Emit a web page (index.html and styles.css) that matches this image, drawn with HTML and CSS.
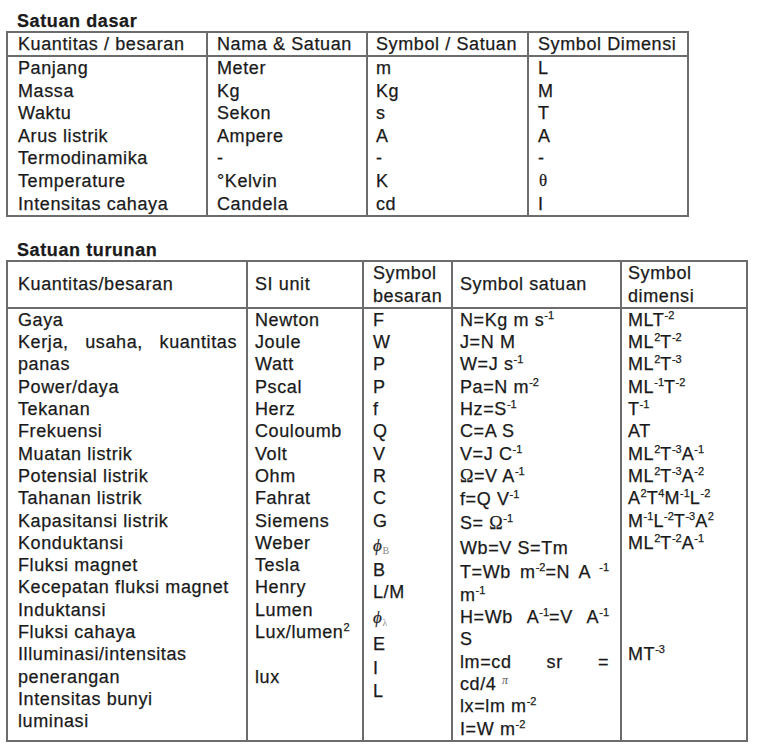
FILE: index.html
```html
<!DOCTYPE html>
<html lang="id">
<head>
<meta charset="utf-8">
<title>Satuan dasar dan turunan</title>
<link rel="stylesheet" href="styles.css">
</head>
<body>
<div class="page">
  <h2 class="title">Satuan dasar</h2>
  <table class="t1">
    <colgroup>
      <col class="c200"><col class="c160"><col class="c161"><col class="c160">
    </colgroup>
    <thead>
      <tr><th class="p1">Kuantitas / besaran</th><th>Nama &amp; Satuan</th><th class="p3">Symbol / Satuan</th><th>Symbol Dimensi</th></tr>
    </thead>
    <tbody>
      <tr><td class="p1">Panjang</td><td>Meter</td><td class="p3">m</td><td>L</td></tr>
      <tr><td class="p1">Massa</td><td>Kg</td><td class="p3">Kg</td><td>M</td></tr>
      <tr><td class="p1">Waktu</td><td>Sekon</td><td class="p3">s</td><td>T</td></tr>
      <tr><td class="p1">Arus listrik</td><td>Ampere</td><td class="p3">A</td><td>A</td></tr>
      <tr><td class="p1">Termodinamika</td><td>-</td><td class="p3">-</td><td>-</td></tr>
      <tr><td class="p1">Temperature</td><td>°Kelvin</td><td class="p3">K</td><td><span class="theta">θ</span></td></tr>
      <tr><td class="p1">Intensitas cahaya</td><td>Candela</td><td class="p3">cd</td><td>I</td></tr>
    </tbody>
  </table>

  <h2 class="title title-2">Satuan turunan</h2>
  <table class="t2">
    <colgroup>
      <col class="w240"><col class="w116"><col class="w89"><col class="w169"><col class="w126">
    </colgroup>
    <thead>
      <tr>
        <th class="q1">Kuantitas/besaran</th>
        <th class="q2">SI unit</th>
        <th class="q3">Symbol<br>besaran</th>
        <th class="q4">Symbol satuan</th>
        <th class="q5 top">Symbol<br>dimensi</th>
      </tr>
    </thead>
    <tbody>
      <tr>
        <td class="q1">
          <div class="ln">Gaya</div>
          <div class="ln just">Kerja, usaha, kuantitas</div>
          <div class="ln">panas</div>
          <div class="ln">Power/daya</div>
          <div class="ln">Tekanan</div>
          <div class="ln">Frekuensi</div>
          <div class="ln">Muatan listrik</div>
          <div class="ln">Potensial listrik</div>
          <div class="ln">Tahanan listrik</div>
          <div class="ln">Kapasitansi listrik</div>
          <div class="ln">Konduktansi</div>
          <div class="ln">Fluksi magnet</div>
          <div class="ln">Kecepatan fluksi magnet</div>
          <div class="ln">Induktansi</div>
          <div class="ln">Fluksi cahaya</div>
          <div class="ln">Illuminasi/intensitas</div>
          <div class="ln">penerangan</div>
          <div class="ln">Intensitas bunyi</div>
          <div class="ln">luminasi</div>
        </td>
        <td class="q2">
          <div class="ln">Newton</div>
          <div class="ln">Joule</div>
          <div class="ln">Watt</div>
          <div class="ln">Pscal</div>
          <div class="ln">Herz</div>
          <div class="ln">Couloumb</div>
          <div class="ln">Volt</div>
          <div class="ln">Ohm</div>
          <div class="ln">Fahrat</div>
          <div class="ln">Siemens</div>
          <div class="ln">Weber</div>
          <div class="ln">Tesla</div>
          <div class="ln">Henry</div>
          <div class="ln">Lumen</div>
          <div class="ln">Lux/lumen<sup>2</sup></div>
          <div class="ln">&nbsp;</div>
          <div class="ln">lux</div>
        </td>
        <td class="q3">
          <div class="ln">F</div>
          <div class="ln">W</div>
          <div class="ln">P</div>
          <div class="ln">P</div>
          <div class="ln">f</div>
          <div class="ln">Q</div>
          <div class="ln">V</div>
          <div class="ln">R</div>
          <div class="ln">C</div>
          <div class="ln">G</div>
          <div class="ln h27"><span class="phi">ϕ</span><sub class="psub">B</sub></div>
          <div class="ln">B</div>
          <div class="ln">L/M</div>
          <div class="ln h28"><span class="phi">ϕ</span><sub class="psub">λ</sub></div>
          <div class="ln h26">E</div>
          <div class="ln">I</div>
          <div class="ln">L</div>
        </td>
        <td class="q4">
          <div class="ln">N=Kg m s<sup>-1</sup></div>
          <div class="ln">J=N M</div>
          <div class="ln">W=J s<sup>-1</sup></div>
          <div class="ln">Pa=N m<sup>-2</sup></div>
          <div class="ln">Hz=S<sup>-1</sup></div>
          <div class="ln">C=A S</div>
          <div class="ln">V=J C<sup>-1</sup></div>
          <div class="ln h235"><span class="om">Ω</span>=V A<sup>-1</sup></div>
          <div class="ln h23">f=Q V<sup>-1</sup></div>
          <div class="ln h24">S= <span class="om">Ω</span><sup>-1</sup></div>
          <div class="ln h26">Wb=V S=Tm</div>
          <div class="ln just">T=Wb m<sup>-2</sup>=N A <sup>-1</sup></div>
          <div class="ln">m<sup>-1</sup></div>
          <div class="ln just">H=Wb A<sup>-1</sup>=V A<sup>-1</sup></div>
          <div class="ln">S</div>
          <div class="ln just">lm=cd sr =</div>
          <div class="ln">cd/4 <span class="pi">π</span></div>
          <div class="ln">lx=lm m<sup>-2</sup></div>
          <div class="ln">I=W m<sup>-2</sup></div>
        </td>
        <td class="q5">
          <div class="ln">MLT<sup>-2</sup></div>
          <div class="ln">ML<sup>2</sup>T<sup>-2</sup></div>
          <div class="ln">ML<sup>2</sup>T<sup>-3</sup></div>
          <div class="ln">ML<sup>-1</sup>T<sup>-2</sup></div>
          <div class="ln">T<sup>-1</sup></div>
          <div class="ln">AT</div>
          <div class="ln">ML<sup>2</sup>T<sup>-3</sup>A<sup>-1</sup></div>
          <div class="ln">ML<sup>2</sup>T<sup>-3</sup>A<sup>-2</sup></div>
          <div class="ln">A<sup>2</sup>T<sup>4</sup>M<sup>-1</sup>L<sup>-2</sup></div>
          <div class="ln">M<sup>-1</sup>L<sup>-2</sup>T<sup>-3</sup>A<sup>2</sup></div>
          <div class="ln">ML<sup>2</sup>T<sup>-2</sup>A<sup>-1</sup></div>
          <div class="ln">&nbsp;</div>
          <div class="ln">&nbsp;</div>
          <div class="ln">&nbsp;</div>
          <div class="ln">&nbsp;</div>
          <div class="ln">MT<sup>-3</sup></div>
        </td>
      </tr>
    </tbody>
  </table>
</div>
</body>
</html>
```

FILE: styles.css
```css
* { box-sizing: border-box; }

html, body {
  margin: 0;
  background: #ffffff;
}

body {
  color: #1a1a1a;
  font-family: "Liberation Sans", Arial, sans-serif;
  font-size: 18px;
  letter-spacing: 0.6px;
  -webkit-text-stroke: 0.25px #1a1a1a;
}

.page {
  padding: 11px 0 0 6px;
}

.title {
  margin: 0;
  padding-left: 11px;
  font-size: 18px;
  font-weight: bold;
  line-height: 20px;
}

.title-2 {
  margin-top: 23px;
}

table {
  border-collapse: collapse;
  table-layout: fixed;
  border: 2px solid #6c6c6c;
}

th, td {
  padding: 0 0 0 9px;
  font-weight: normal;
  text-align: left;
  white-space: nowrap;
  border-left: 2px solid #6c6c6c;
}

th {
  border-bottom: 2px solid #6c6c6c;
}

/* table 1 */
.t1 { width: 683px; }
.t1 th, .t1 td { line-height: 22.4px; }
.c200 { width: 200px; }
.c160 { width: 160px; }
.c161 { width: 161px; }
.t1 .p1 { padding-left: 10px; }
.t1 .p3 { padding-left: 8px; }

.theta {
  font-family: "Liberation Serif", "DejaVu Serif", serif;
  font-size: 17px;
  margin-left: 1px;
}

/* table 2 */
.t2 { width: 742px; }
.t2 th { line-height: 22.3px; vertical-align: middle; }
.t2 th.top { vertical-align: top; }
.t2 td { vertical-align: top; }

.w240 { width: 240px; }
.w116 { width: 116px; }
.w89 { width: 89px; }
.w169 { width: 169px; }
.w126 { width: 126px; }

.q1 { padding-left: 10px !important; padding-right: 9px !important; }
.q2 { padding-left: 7px !important; }
.q3 { padding-left: 9px !important; }
.q4 { padding-left: 7px !important; padding-right: 11px !important; }
.q5 { padding-left: 6px !important; }

.ln {
  height: 22.3px;
  line-height: 22.3px;
  white-space: nowrap;
}

.ln.just {
  white-space: normal;
  text-align: justify;
  text-align-last: justify;
}

.h23 { height: 23px; line-height: 23px; }
.h235 { height: 23.5px; line-height: 23.5px; }
.h24 { height: 24px; line-height: 24px; }
.h26 { height: 26px; line-height: 26px; }
.h27 { height: 27px; line-height: 27px; }
.h28 { height: 28px; line-height: 28px; }

sup {
  font-size: 11px;
  line-height: 0;
  vertical-align: 7px;
  letter-spacing: 0;
}

.phi {
  font-family: "Liberation Serif", "DejaVu Serif", serif;
  font-style: italic;
  font-size: 17px;
  color: #1a1a1a;
}

.psub {
  font-family: "Liberation Serif", "DejaVu Serif", serif;
  font-size: 10px;
  line-height: 0;
  vertical-align: -3px;
  color: #888888;
  letter-spacing: 0;
  -webkit-text-stroke: 0;
}

.om {
  font-family: "Liberation Serif", "DejaVu Serif", serif;
  font-size: 18px;
}

.pi {
  font-family: "Liberation Serif", "DejaVu Serif", serif;
  font-style: italic;
  font-size: 12px;
  line-height: 0;
  vertical-align: 6px;
  color: #555555;
  -webkit-text-stroke: 0;
}
```
